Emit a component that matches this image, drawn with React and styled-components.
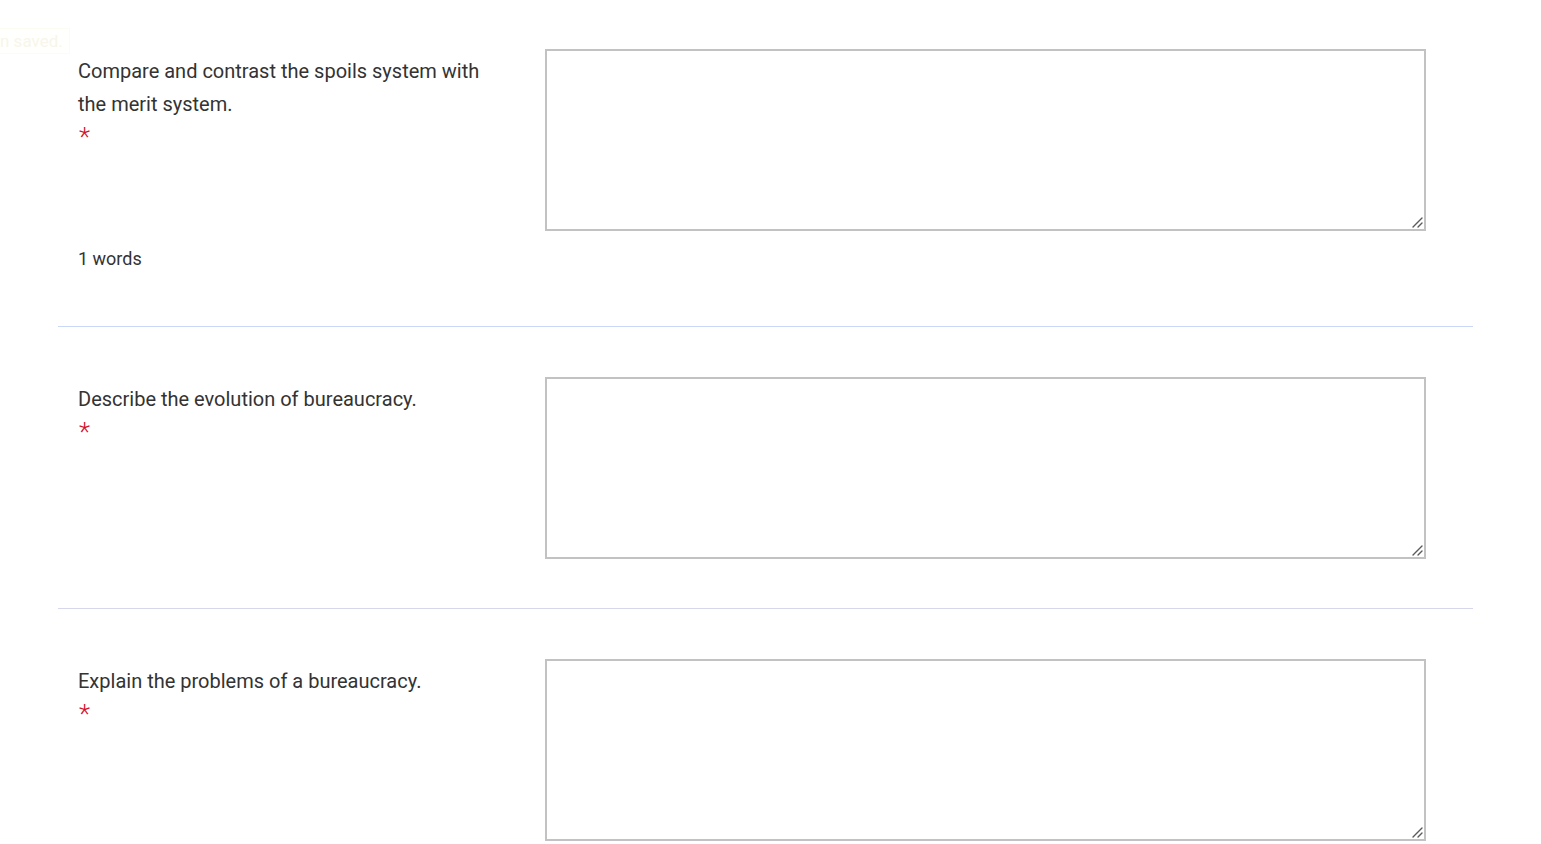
import React from "react";
import styled, { createGlobalStyle } from "styled-components";

const GlobalStyle = createGlobalStyle`
  body {
    margin: 0;
    background: #ffffff;
    font-family: Roboto, "Liberation Sans", Arial, sans-serif;
    color: #333333;
  }
`;

const Page = styled.div`
  position: relative;
  width: 1541px;
  min-height: 844px;
  overflow: hidden;
`;

const Toast = styled.div`
  position: absolute;
  top: 28px;
  left: 0;
  padding: 2px 6px 2px 0;
  font-size: 17px;
  color: #f8f6ea;
  border: 1px solid #fcfbf4;
  border-left: none;
  background: #fffffd;
`;

const Questions = styled.div`
  margin-left: 58px;
  width: 1415px;
`;

const Section = styled.section`
  padding: ${(p) => (p.$first ? "49px" : "50px")} 0 ${(p) => (p.$last ? "0" : "49px")};
  border-bottom: ${(p) => (p.$last ? "none" : `1px solid ${p.$line}`)};
`;

const Row = styled.div`
  display: flex;
  gap: 20px;
  padding: 0 47px 0 20px;
`;

const Label = styled.div`
  width: 420px;
  padding-right: 27px;
  flex: none;
  padding-top: 6px;
`;

const Question = styled.div`
  font-size: 20px;
  line-height: 33px;
  color: #333333;
`;

const Required = styled.div`
  color: #d0112b;
  font-size: 26px;
  font-weight: 300;
  line-height: 30px;
  height: 30px;
  padding-top: 1px;
  padding-left: 1px;
`;

const Field = styled.div`
  position: relative;
  flex: 1;
  display: flex;
`;

const Answer = styled.textarea`
  flex: 1;
  height: 182px;
  box-sizing: border-box;
  border: 2px solid #c2c2c2;
  border-radius: 0;
  resize: none;
  font-family: inherit;
  font-size: 16px;
  padding: 8px;
  outline: none;
`;

const Grip = styled.svg`
  position: absolute;
  right: 3px;
  bottom: 3px;
  width: 11px;
  height: 11px;
  pointer-events: none;
`;

const WordCount = styled.div`
  padding: 18px 20px 8px;
  font-size: 18px;
  line-height: 20px;
  color: #333333;
`;

const items = [
  {
    text: "Compare and contrast the spoils system with the merit system.",
    count: true,
    line: "#cbd7f6",
  },
  { text: "Describe the evolution of bureaucracy.", line: "#d6d6ec" },
  { text: "Explain the problems of a bureaucracy.", line: "#d6d6ec" },
];

export default function App() {
  return (
    <Page>
      <GlobalStyle />
      <Toast>n saved.</Toast>
      <Questions>
        {items.map((q, i) => (
          <Section
            key={i}
            $first={i === 0}
            $last={i === items.length - 1}
            $line={q.line}
          >
            <Row>
              <Label>
                <Question>{q.text}</Question>
                <Required>*</Required>
              </Label>
              <Field>
                <Answer />
                <Grip viewBox="0 0 11 11">
                  <path
                    d="M1 10L10 1M6 10L10 6"
                    stroke="#5a5a5a"
                    strokeWidth="1.4"
                    strokeLinecap="round"
                    fill="none"
                  />
                </Grip>
              </Field>
            </Row>
            {q.count && <WordCount>1 words</WordCount>}
          </Section>
        ))}
      </Questions>
    </Page>
  );
}
